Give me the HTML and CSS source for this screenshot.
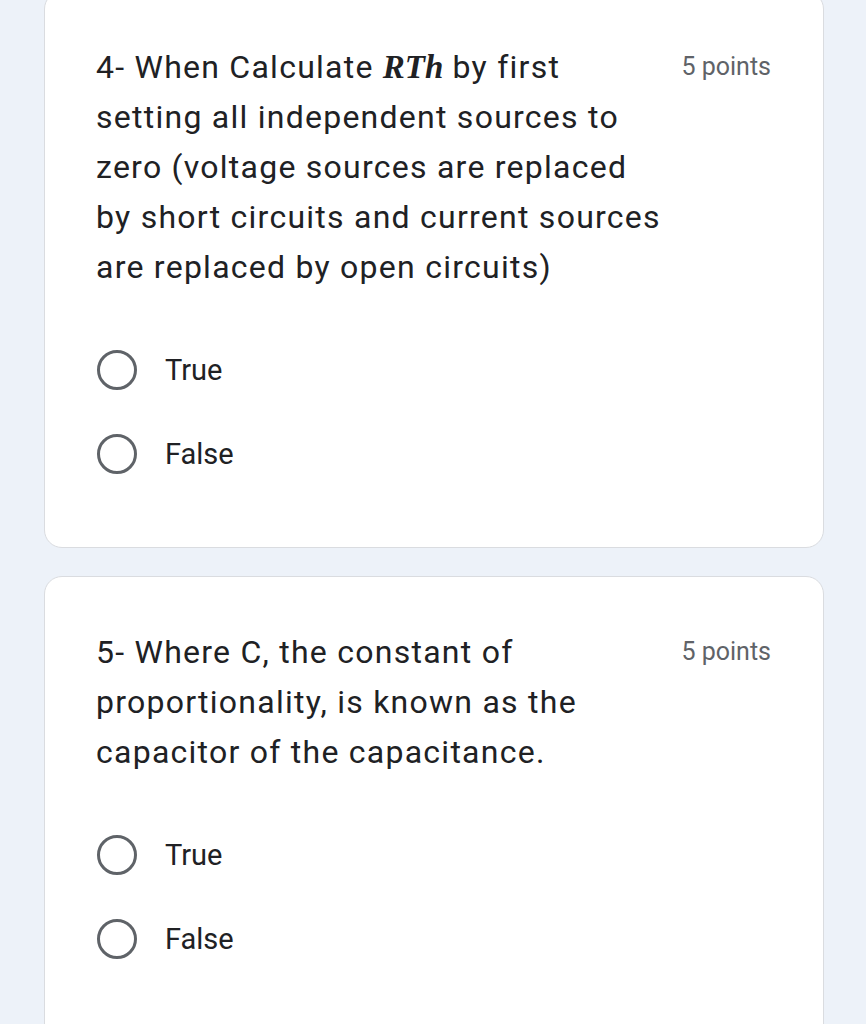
FILE: index.html
```html
<!DOCTYPE html>
<html>
<head>
<meta charset="utf-8">
<link rel="stylesheet" href="styles.css">
</head>
<body>
<div class="page">
  <div class="card card-first">
    <div class="head">
      <div class="question">4- When Calculate <b class="math">RTh</b> by first<br>setting all independent sources to<br>zero (voltage sources are replaced<br>by short circuits and current sources<br>are replaced by open circuits)</div>
      <div class="points">5 points</div>
    </div>
    <div class="options">
      <div class="option"><span class="radio"></span><span class="label">True</span></div>
      <div class="option"><span class="radio"></span><span class="label">False</span></div>
    </div>
  </div>
  <div class="card">
    <div class="head">
      <div class="question">5- Where C, the constant of<br>proportionality, is known as the<br>capacitor of the capacitance.</div>
      <div class="points">5 points</div>
    </div>
    <div class="options">
      <div class="option"><span class="radio"></span><span class="label">True</span></div>
      <div class="option"><span class="radio"></span><span class="label">False</span></div>
    </div>
  </div>
</div>
</body>
</html>
```
FILE: styles.css
```css
html, body {
  margin: 0;
  padding: 0;
  background: #edf2f9;
  overflow: hidden;
}
.page {
  display: flex;
  flex-direction: column;
  gap: 28px;
  padding: 0 42px 0 44px;
  margin-top: -9px;
}
.card {
  background: #fff;
  border: 1.5px solid #dadce0;
  border-radius: 18px;
  padding: 50px 50px 60px 51px;
  height: 520px;
}
.card-first {
  height: auto;
  padding-bottom: 71px;
}
.head {
  display: flex;
  justify-content: space-between;
  align-items: flex-start;
}
.question {
  font-family: Roboto, "Liberation Sans", sans-serif;
  font-size: 32px;
  letter-spacing: 1.25px;
  line-height: 50px;
  color: #202124;
  white-space: nowrap;
}
.math {
  font-family: "Liberation Serif", serif;
  font-style: italic;
  font-weight: bold;
  font-size: 33px;
  letter-spacing: 0;
}
.points {
  font-family: Roboto, "Liberation Sans", sans-serif;
  font-size: 25px;
  line-height: 50px;
  color: #5f6368;
  margin-right: 2px;
}
.options {
  margin-top: 56px;
  display: flex;
  flex-direction: column;
  gap: 40px;
}
.option {
  display: flex;
  align-items: center;
  gap: 28px;
  height: 44px;
}
.radio {
  width: 40px;
  height: 40px;
  border: 3.5px solid #5f6368;
  border-radius: 50%;
  box-sizing: border-box;
  margin-left: 1px;
}
.label {
  font-family: Roboto, "Liberation Sans", sans-serif;
  font-size: 29px;
  color: #202124;
}
```
